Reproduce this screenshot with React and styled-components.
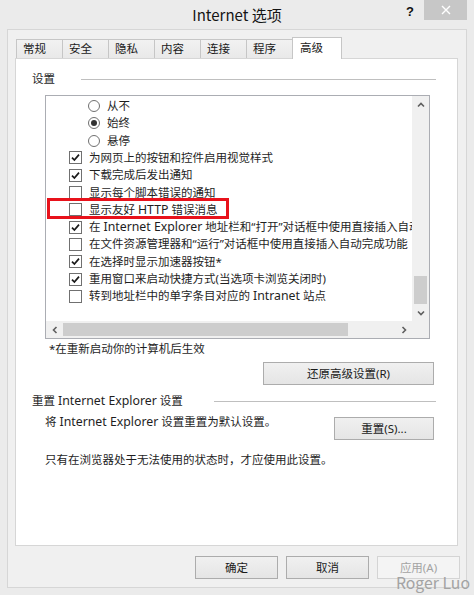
import React from 'react';
import styled, { createGlobalStyle } from 'styled-components';

const GlobalStyle = createGlobalStyle`
  html, body { margin: 0; padding: 0; background: #ebebeb; }
  body {
    font-family: "Noto Sans", "Noto Sans CJK SC", sans-serif;
    font-size: 11.5px;
    color: #1e1e1e;
  }
  #root { width: 474px; height: 595px; overflow: hidden; }
`;

const Window = styled.div`
  position: relative;
  width: 474px;
  height: 595px;
  background: #ebebeb;
  display: flex;
  flex-direction: column;
  box-sizing: border-box;
`;

const TitleBar = styled.div`
  flex: none;
  height: 29px;
  display: grid;
  grid-template-columns: 1fr auto 1fr;
  align-items: start;
`;

const Title = styled.div`
  grid-column: 2;
  font-family: "Noto Sans CJK SC", sans-serif;
  font-size: 15px;
  line-height: 29px;
  color: #141414;
`;

const Controls = styled.div`
  grid-column: 3;
  justify-self: end;
  display: flex;
  align-items: flex-start;
  margin-right: 7px;
`;

const HelpButton = styled.div`
  width: 24px;
  height: 24px;
  margin-right: 2px;
  font-family: "Liberation Sans", sans-serif;
  font-weight: bold;
  font-size: 13px;
  line-height: 24px;
  text-align: center;
  color: #111;
`;

const CloseButton = styled.div`
  width: 43px;
  height: 20px;
  background: #c7c7c7;
  display: flex;
  align-items: center;
  justify-content: center;
`;

const Client = styled.div`
  flex: 1;
  min-height: 0;
  margin: 0 7px 7px;
  border: 1px solid #d6d6d6;
  background: #f0f0f0;
  display: flex;
  flex-direction: column;
  padding: 7px 6px 8px 7px;
  box-sizing: border-box;
`;

const TabRow = styled.div`
  flex: none;
  height: 21px;
  display: flex;
  align-items: flex-end;
  margin-left: 1px;
  position: relative;
  z-index: 1;
`;

const Tab = styled.div`
  box-sizing: border-box;
  height: ${p => (p.$active ? 22 : 19)}px;
  width: ${p => (p.$active ? 50 : 47)}px;
  margin-left: ${p => (p.$first ? 0 : -1)}px;
  margin-bottom: ${p => (p.$active ? -1 : 0)}px;
  padding: ${p => (p.$active ? '1px 0 0 7px' : '0 0 0 6px')};
  border: 1px solid #c6c6c6;
  border-bottom: none;
  background: ${p => (p.$active ? '#ffffff' : 'linear-gradient(#f2f2f2, #e9e9e9)')};
  line-height: 18px;
  color: #1a1a1a;
  position: relative;
  z-index: ${p => (p.$active ? 2 : 1)};
`;

const Panel = styled.div`
  flex: 1;
  min-height: 0;
  background: #ffffff;
  border: 1px solid #d6d6d6;
  margin-right: 2px;
  padding: 12px 21px 0 16px;
  display: flex;
  flex-direction: column;
  box-sizing: border-box;
`;

const GroupHeader = styled.div`
  display: flex;
  align-items: center;
  height: 16px;
  line-height: 16px;
  margin-top: ${p => p.$top || 0}px;
`;

const GroupLabel = styled.span`
  white-space: nowrap;
`;

const Rule = styled.div`
  flex: 1;
  height: 1px;
  background: #bfbfbf;
  margin-left: ${p => p.$gap}px;
`;

const ListBox = styled.div`
  margin: 8px 0 0 13px;
  width: 385px;
  height: 244px;
  box-sizing: border-box;
  border: 1px solid #abadb3;
  background: #fff;
  display: grid;
  grid-template-columns: 1fr 17px;
  grid-template-rows: 1fr 17px;
`;

const Viewport = styled.div`
  overflow: hidden;
  padding-top: 1.4px;
  min-width: 0;
`;

const Row = styled.div`
  position: relative;
  height: 17.3px;
  display: flex;
  align-items: center;
  gap: 7px;
  padding-left: ${p => (p.$radio ? 42 : 23)}px;
  white-space: nowrap;
  line-height: 16px;

  ${p =>
    p.$highlight &&
    `
    &::after {
      content: '';
      position: absolute;
      left: 1px;
      top: -3px;
      width: 182px;
      height: 21px;
      box-sizing: border-box;
      border: 3px solid #e8121b;
    }
  `}
`;

const Mark = styled.svg`
  flex: none;
  display: block;
`;

const Latin = styled.span`
  font-size: 12.3px;
`;

const VScroll = styled.div`
  background: #f0f0f0;
  display: flex;
  flex-direction: column;
`;

const HScroll = styled.div`
  background: #f0f0f0;
  display: flex;
  flex-direction: row;
`;

const Corner = styled.div`
  background: #f0f0f0;
`;

const ArrowButton = styled.div`
  flex: none;
  width: 17px;
  height: 17px;
  display: flex;
  align-items: center;
  justify-content: center;
`;

const Track = styled.div`
  flex: 1;
  display: flex;
  flex-direction: ${p => (p.$vertical ? 'column' : 'row')};
`;

const Thumb = styled.div`
  flex: none;
  background: #cdcdcd;
  ${p => (p.$vertical ? 'width: 13px; margin-left: 2px;' : 'height: 13px; margin-top: 2px;')}
`;

const ChevronSvg = styled.svg`
  display: block;
  transform: rotate(${p => p.$rot}deg);
`;

const Note = styled.div`
  margin: 2px 0 0 17px;
  line-height: 16px;
`;

const Button = styled.div`
  box-sizing: border-box;
  width: ${p => p.$w}px;
  height: 23px;
  border: 1px solid ${p => (p.$disabled ? '#d4d4d4' : '#acacac')};
  background: ${p => (p.$disabled ? '#f4f4f4' : 'linear-gradient(#f0f0f0, #e5e5e5)')};
  color: ${p => (p.$disabled ? '#a3a3a3' : '#1a1a1a')};
  display: flex;
  align-items: center;
  justify-content: center;
  line-height: 16px;
  white-space: nowrap;
  flex: none;
`;

const RightButton = styled(Button)`
  align-self: flex-end;
  margin: 5px 2px 0 0;
`;

const ResetRow = styled.div`
  display: flex;
  align-items: flex-start;
  justify-content: space-between;
  margin: 5px 2px 0 13px;
`;

const ResetText = styled.div`
  line-height: 16px;
`;

const ResetButton = styled(Button)`
  margin-top: 3px;
`;

const Hint = styled.div`
  margin: 12px 0 0 13px;
  line-height: 16px;
`;

const Footer = styled.div`
  flex: none;
  margin-top: 10px;
  display: flex;
  justify-content: flex-end;
  gap: 8px;
`;

const Watermark = styled.div`
  position: absolute;
  right: 4px;
  bottom: 4px;
  font-family: "Noto Sans CJK SC", sans-serif;
  font-size: 15.8px;
  line-height: 16px;
  color: #a3a3a3;
`;

// Wrap multi-letter Latin words so they get the slightly larger Latin size.
const mixed = text =>
  text.split(/([A-Za-z]{2,}(?: [A-Za-z]{2,})*)/).map((part, i) =>
    i % 2 === 1 ? <Latin key={i}>{part}</Latin> : part
  );

const Chevron = ({ dir }) => {
  const rot = { up: 0, right: 90, down: 180, left: 270 }[dir];
  return (
    <ChevronSvg $rot={rot} width="8" height="8" viewBox="0 0 8 8">
      <polyline points="1,5.5 4,2.5 7,5.5" fill="none" stroke="#5f5f5f" strokeWidth="1.6" />
    </ChevronSvg>
  );
};

const CheckBox = ({ checked }) => (
  <Mark width="13" height="13" viewBox="0 0 13 13">
    <rect x="0.5" y="0.5" width="12" height="12" fill="#fff" stroke="#707070" />
    {checked && <path d="M3 6.6 L5.4 9.1 L10 3.6" fill="none" stroke="#1a1a1a" strokeWidth="1.7" />}
  </Mark>
);

const Radio = ({ checked }) => (
  <Mark width="12" height="12" viewBox="0 0 12 12">
    <circle cx="6" cy="6" r="5.5" fill="#fff" stroke="#707070" />
    {checked && <circle cx="6" cy="6" r="3" fill="#333" />}
  </Mark>
);

const tabs = ['常规', '安全', '隐私', '内容', '连接', '程序', '高级'];

const items = [
  { radio: true, label: '从不' },
  { radio: true, label: '始终', checked: true },
  { radio: true, label: '悬停' },
  { label: '为网页上的按钮和控件启用视觉样式', checked: true },
  { label: '下载完成后发出通知', checked: true },
  { label: '显示每个脚本错误的通知' },
  { label: '显示友好 HTTP 错误消息', highlight: true },
  { label: '在 Internet Explorer 地址栏和“打开”对话框中使用直接插入自动完成功能', checked: true },
  { label: '在文件资源管理器和“运行”对话框中使用直接插入自动完成功能' },
  { label: '在选择时显示加速器按钮*', checked: true },
  { label: '重用窗口来启动快捷方式(当选项卡浏览关闭时)', checked: true },
  { label: '转到地址栏中的单字条目对应的 Intranet 站点' },
];

export default function App() {
  return (
    <>
      <GlobalStyle />
      <Window>
        <TitleBar>
          <Title>Internet 选项</Title>
          <Controls>
            <HelpButton>?</HelpButton>
            <CloseButton>
              <svg width="10" height="10" viewBox="0 0 10 10">
                <path d="M1 1 L9 9 M9 1 L1 9" stroke="#fff" strokeWidth="1.4" />
              </svg>
            </CloseButton>
          </Controls>
        </TitleBar>

        <Client>
          <TabRow>
            {tabs.map((t, i) => (
              <Tab key={t} $first={i === 0} $active={i === tabs.length - 1}>
                {t}
              </Tab>
            ))}
          </TabRow>

          <Panel>
            <GroupHeader>
              <GroupLabel>设置</GroupLabel>
              <Rule $gap={26} />
            </GroupHeader>

            <ListBox>
              <Viewport>
                {items.map((it, i) => (
                  <Row key={i} $radio={it.radio} $highlight={it.highlight}>
                    {it.radio ? <Radio checked={it.checked} /> : <CheckBox checked={it.checked} />}
                    <span>{mixed(it.label)}</span>
                  </Row>
                ))}
              </Viewport>
              <VScroll>
                <ArrowButton>
                  <Chevron dir="up" />
                </ArrowButton>
                <Track $vertical>
                  <Thumb $vertical style={{ marginTop: 163, height: 28 }} />
                </Track>
                <ArrowButton>
                  <Chevron dir="down" />
                </ArrowButton>
              </VScroll>
              <HScroll>
                <ArrowButton>
                  <Chevron dir="left" />
                </ArrowButton>
                <Track>
                  <Thumb style={{ width: 285 }} />
                </Track>
                <ArrowButton>
                  <Chevron dir="right" />
                </ArrowButton>
              </HScroll>
              <Corner />
            </ListBox>

            <Note>*在重新启动你的计算机后生效</Note>
            <RightButton $w={171}>还原高级设置(R)</RightButton>

            <GroupHeader $top={8}>
              <GroupLabel>{mixed('重置 Internet Explorer 设置')}</GroupLabel>
              <Rule $gap={31} />
            </GroupHeader>

            <ResetRow>
              <ResetText>{mixed('将 Internet Explorer 设置重置为默认设置。')}</ResetText>
              <ResetButton $w={100}>重置(S)...</ResetButton>
            </ResetRow>

            <Hint>只有在浏览器处于无法使用的状态时，才应使用此设置。</Hint>
          </Panel>

          <Footer>
            <Button $w={83}>确定</Button>
            <Button $w={83}>取消</Button>
            <Button $w={83} $disabled>应用(A)</Button>
          </Footer>
        </Client>

        <Watermark>Roger Luo</Watermark>
      </Window>
    </>
  );
}
